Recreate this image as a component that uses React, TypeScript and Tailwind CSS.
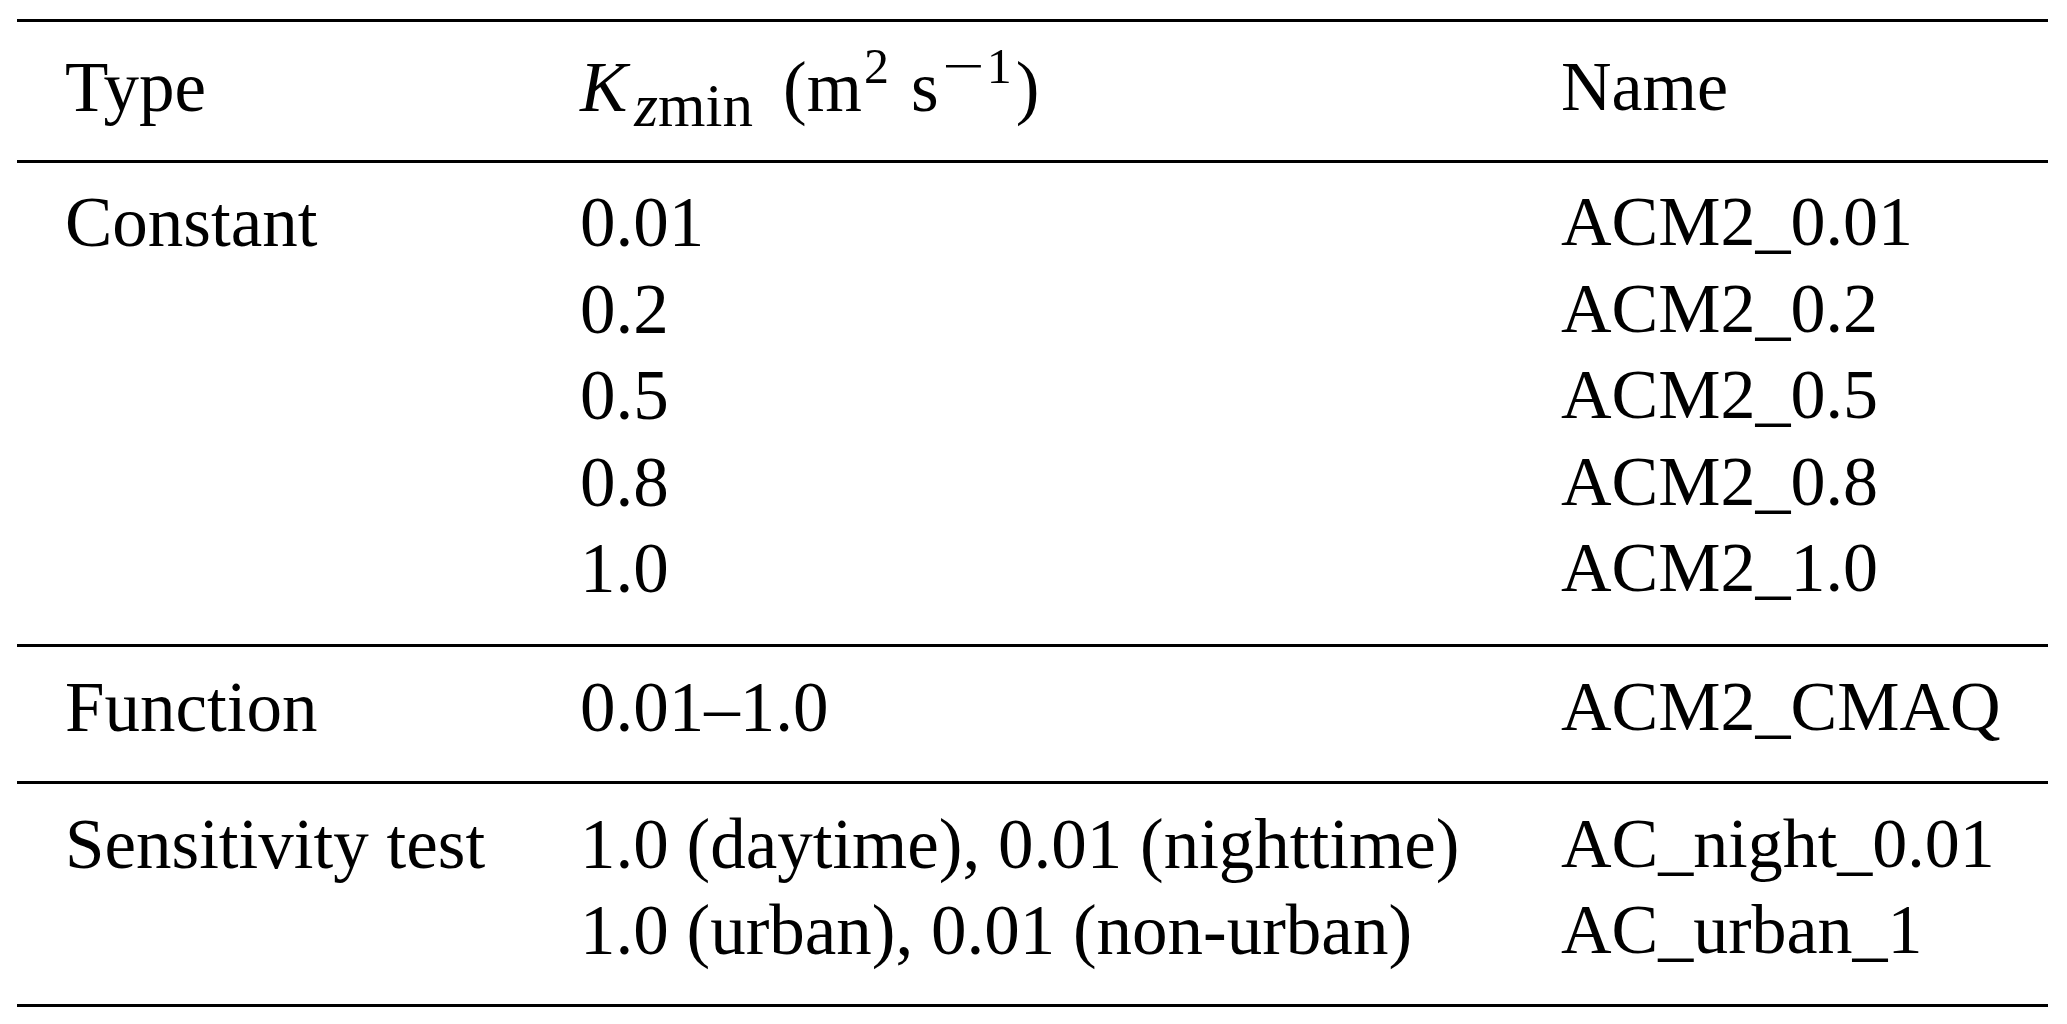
import React from "react";

function Section({
  className,
  rows,
}: {
  className: string;
  rows: [React.ReactNode, React.ReactNode, React.ReactNode][];
}) {
  return (
    <div className={`border-t-[3px] border-black pl-[48px] grid grid-cols-[515px_981px_1fr] ${className}`}>
      {rows.map((r, i) => (
        <React.Fragment key={i}>
          <div className="whitespace-nowrap">{r[0]}</div>
          <div className="whitespace-nowrap">{r[1]}</div>
          <div className="whitespace-nowrap text-[70px]">{r[2]}</div>
        </React.Fragment>
      ))}
    </div>
  );
}

export default function App() {
  return (
    <div className="w-[2067px] h-[1024px] bg-white overflow-hidden pt-[19px] pl-[17px] font-['Liberation_Serif']">
      <div className="w-[2031px] text-[71px] leading-[86.4px] text-black border-b-[3px] border-black">
        <Section
          className="pt-[22px] pb-[30px]"
          rows={[
            [
              "Type",
              <span>
                <span className="italic">K</span>
                <span className="relative top-[15px] text-[61px] leading-none ml-[7px]">
                  <span className="italic">z</span>min
                </span>
                <span className="ml-[30px]">(m</span>
                <span className="relative -top-[28px] text-[50px] leading-none ml-[2px]">2</span>
                <span className="ml-[22px]">s</span>
                <span className="relative -top-[28px] text-[50px] leading-none">
                  <span className="inline-block scale-x-[1.5] mx-[10px]">−</span>1
                </span>
                <span className="ml-[4px]">)</span>
              </span>,
              "Name",
            ],
          ]}
        />
        <Section
          className="pt-[16px] pb-[33px]"
          rows={[
            ["Constant", "0.01", "ACM2_0.01"],
            ["", "0.2", "ACM2_0.2"],
            ["", "0.5", "ACM2_0.5"],
            ["", "0.8", "ACM2_0.8"],
            ["", "1.0", "ACM2_1.0"],
          ]}
        />
        <Section className="pt-[17px] pb-[30px]" rows={[["Function", "0.01–1.0", "ACM2_CMAQ"]]} />
        <Section
          className="pt-[17px] pb-[30px]"
          rows={[
            ["Sensitivity test", "1.0 (daytime), 0.01 (nighttime)", "AC_night_0.01"],
            ["", "1.0 (urban), 0.01 (non-urban)", "AC_urban_1"],
          ]}
        />
      </div>
    </div>
  );
}
